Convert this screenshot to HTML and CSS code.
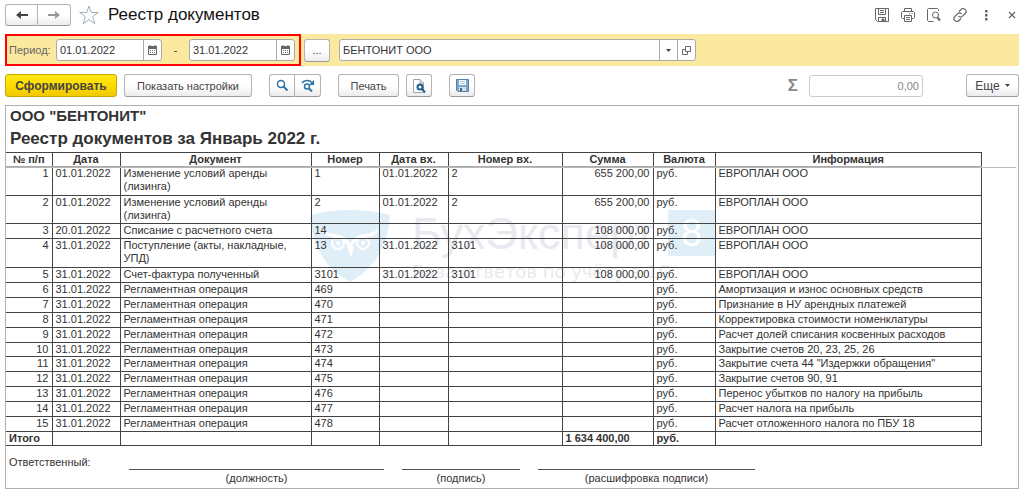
FILE: index.html
```html
<!DOCTYPE html>
<html lang="ru">
<head>
  <meta charset="UTF-8">
  <meta name="viewport" content="width=device-width, initial-scale=1.0">
  <title>Реестр документов</title>
  <link rel="stylesheet" href="styles.css">
</head>
<body>
  <!-- Заголовок формы -->
  <header class="titlebar">
    <div class="btn-group">
      <button class="btn nav-btn" aria-label="Назад">
        <svg width="14" height="12" viewBox="0 0 14 12"><path d="M13 6H3" stroke="#444" stroke-width="2"/><path d="M1 6l5-4v2.500L4.500 6 6 7.500V10z" fill="#444"/></svg>
      </button>
      <button class="btn nav-btn" aria-label="Вперед">
        <svg width="14" height="12" viewBox="0 0 14 12"><path d="M1 6h10" stroke="#999" stroke-width="2"/><path d="M13 6L8 2v2.500L9.500 6 8 7.500V10z" fill="#999"/></svg>
      </button>
    </div>
    <button class="icon-btn star" aria-label="В избранное">
      <svg width="20" height="20" viewBox="0 0 20 20"><path d="M10 1l2.300 6.500h7l-5.600 4.200 2.100 7L10 14.600l-5.800 4.100 2.100-7L.7 7.500h7z" fill="#fff" stroke="#a4adb6"/></svg>
    </button>
    <h1>Реестр документов</h1>
    <div class="window-tools">
      <button class="icon-btn" aria-label="Сохранить">
        <svg width="14" height="14" viewBox="0 0 14 14" fill="none" stroke="#666"><path d="M.5.5h13v13h-11l-2-2zM3.500.5v6h7v-6M5 2.500h4M5 4.500h4M3.500 13.500v-4h7v4"/><path d="M7 11h2v2H7z" fill="#666"/></svg>
      </button>
      <button class="icon-btn" aria-label="Печать">
        <svg width="14" height="14" viewBox="0 0 14 14" fill="none" stroke="#666"><path d="M3.500 3.500v-3h7v3M3.500 10.500h-2l-1-1v-5l1-1h11l1 1v5l-1 1h-2M3.500 7.500h7v6h-7zM5 9.500h4M5 11.500h4M8 5.500h1M10.500 5.500h1"/></svg>
      </button>
      <button class="icon-btn" aria-label="Просмотр">
        <svg width="14" height="14" viewBox="0 0 14 14" fill="none" stroke="#666"><path d="M11.500 3V1.500l-1-1h-9l-1 1v11l1 1h5"/><circle cx="8.500" cy="7" r="3"/><path d="M10.500 9.500l2.500 3" stroke-width="2"/></svg>
      </button>
      <button class="icon-btn" aria-label="Ссылка">
        <svg width="14" height="14" viewBox="0 0 14 14" fill="none" stroke="#666" stroke-width="1.200"><path d="M6 3.500L8 1.500a2.800 2.800 0 0 1 4.200 4L9.500 8.200a2.800 2.800 0 0 1-4 0M8 10.500l-2 2a2.800 2.800 0 0 1-4.200-4L4.500 5.800a2.800 2.800 0 0 1 4 0"/></svg>
      </button>
      <button class="icon-btn" aria-label="Меню">
        <svg width="14" height="14" viewBox="0 0 14 14" fill="#666"><path d="M6 2h2.500v2.500H6zM6 6h2.500v2.500H6zM6 10h2.500v2.500H6z"/></svg>
      </button>
      <button class="icon-btn" aria-label="Закрыть">
        <svg width="14" height="14" viewBox="0 0 14 14"><path d="M4 4l6 6M10 4l-6 6" stroke="#666" stroke-width="1.200"/></svg>
      </button>
    </div>
  </header>

  <!-- Отбор по периоду и организации -->
  <section class="filter">
    <div class="period">
      <label for="date-from">Период:</label>
      <div class="field date">
        <input id="date-from" type="text" value="01.01.2022">
        <button class="field-btn" aria-label="Выбрать дату начала">
          <svg width="9" height="10" viewBox="0 0 9 10"><path d="M.5 1.500h8v8h-8z" fill="none" stroke="#666"/><path d="M0 1h9v3H0z" fill="#666"/><path d="M2 0v2M7 0v2" stroke="#666"/><path d="M2 5.500h5M2 7.500h5" stroke="#777" stroke-dasharray="1 1"/></svg>
        </button>
      </div>
      <span class="dash">-</span>
      <div class="field date">
        <input id="date-to" type="text" value="31.01.2022" aria-label="Конец периода">
        <button class="field-btn" aria-label="Выбрать дату окончания">
          <svg width="9" height="10" viewBox="0 0 9 10"><path d="M.5 1.500h8v8h-8z" fill="none" stroke="#666"/><path d="M0 1h9v3H0z" fill="#666"/><path d="M2 0v2M7 0v2" stroke="#666"/><path d="M2 5.500h5M2 7.500h5" stroke="#777" stroke-dasharray="1 1"/></svg>
        </button>
      </div>
    </div>
    <button class="btn more-period">...</button>
    <div class="field company">
      <input type="text" value="БЕНТОНИТ ООО" aria-label="Организация">
      <button class="field-btn" aria-label="Выбрать из списка">
        <svg width="5" height="3" viewBox="0 0 5 3"><path d="M0 0h5L2.500 3z" fill="#444"/></svg>
      </button>
      <button class="field-btn" aria-label="Открыть">
        <svg width="9" height="9" viewBox="0 0 9 9" fill="none" stroke="#666"><path d="M3.500.5h5v5h-5zM3.500 3.500h-3v5h5v-3"/></svg>
      </button>
    </div>
  </section>

  <!-- Командная панель -->
  <section class="toolbar">
    <button class="btn primary">Сформировать</button>
    <button class="btn settings">Показать настройки</button>
    <div class="btn-group search">
      <button class="btn tool" aria-label="Найти">
        <svg width="13" height="13" viewBox="0 0 13 13" fill="none" stroke="#2a74a5"><circle cx="5" cy="5" r="3.500" stroke-width="1.500"/><path d="M7.500 7.500l4 4" stroke-width="2"/></svg>
      </button>
      <button class="btn tool" aria-label="Найти далее">
        <svg width="14" height="14" viewBox="0 0 14 14" fill="none" stroke="#2a74a5"><circle cx="6" cy="7.500" r="2.500" stroke-width="1.500"/><path d="M8 9.500l3 3" stroke-width="2"/><path d="M1 4C3.500 1 8 .5 11 3.500" stroke-width="1.500"/><path d="M13 1v5H8z" fill="#2a74a5" stroke="none"/></svg>
      </button>
    </div>
    <button class="btn print">Печать</button>
    <button class="btn tool" aria-label="Предварительный просмотр">
      <svg width="14" height="14" viewBox="0 0 14 14" fill="none"><path d="M8 .5H1.500v13h10V4z" fill="#fff" stroke="#9aa5ae"/><path d="M8 .5V4h3.500" stroke="#9aa5ae"/><circle cx="8" cy="8" r="2.500" stroke="#1d5c8c" stroke-width="2"/><path d="M10 10l3 3.500" stroke="#1d5c8c" stroke-width="2"/></svg>
    </button>
    <button class="btn tool save" aria-label="Сохранить отчет">
      <svg width="13" height="13" viewBox="0 0 13 13"><path d="M.5.500h12v12H2l-1.500-1.500z" fill="#7ba5cb" stroke="#5580a8"/><path d="M3 1h7v5H3z" fill="#fff"/><path d="M4 2.500h5M4 4.500h5" stroke="#a9bfd3"/><path d="M3 8h7v4H3z" fill="#d5dde5"/><path d="M4 9h2v3H4z" fill="#41668a"/></svg>
    </button>
    <label class="sigma" for="sum">Σ</label>
    <input id="sum" class="sum" type="text" value="0,00" readonly>
    <button class="btn more">Еще
      <svg width="5" height="3" viewBox="0 0 5 3"><path d="M0 0h5L2.500 3z" fill="#444"/></svg>
    </button>
  </section>

  <!-- Табличный документ -->
  <main class="report">
    <h2 class="company-name">ООО "БЕНТОНИТ"</h2>
    <h2 class="report-name">Реестр документов за Январь 2022 г.</h2>

    <div class="sheet">
      <div class="watermark" aria-hidden="true">
        <svg width="80" height="72" viewBox="0 0 80 72"><path d="M0 5Q40-5 80 5Q77 52 40 72Q3 52 0 5z" fill="#e0eef7"/><path d="M11 18q6 6 15 6q9 1 14 9q5-8 14-9q9 0 15-6q-3 9-12 9q-9-1-17 12q-8-13-17-12q-9 0-12-9z" fill="#fff"/><g fill="none" stroke="#fff" stroke-width="2"><circle cx="28" cy="33" r="6"/><circle cx="53" cy="33" r="6"/></g><path d="M37 36h7l-3 12z" fill="#fff"/><circle cx="28" cy="33" r="2" fill="#fff"/><circle cx="53" cy="33" r="2" fill="#fff"/></svg>
        <div class="wm-text">
          <div class="wm-name">БухЭксперт</div>
          <div class="wm-slogan">База ответов по учёту в 1С</div>
        </div>
        <div class="wm-eight">8</div>
      </div>

      <table>
        <colgroup>
          <col class="c-num"><col class="c-date"><col class="c-doc"><col class="c-no"><col class="c-date-in"><col class="c-no-in"><col class="c-sum"><col class="c-cur"><col class="c-info">
        </colgroup>
        <thead>
          <tr><th>№ п/п</th><th>Дата</th><th>Документ</th><th>Номер</th><th>Дата вх.</th><th>Номер вх.</th><th>Сумма</th><th>Валюта</th><th>Информация</th></tr>
        </thead>
        <tbody>
          <tr><td class="r">1</td><td>01.01.2022</td><td>Изменение условий аренды (лизинга)</td><td>1</td><td>01.01.2022</td><td>2</td><td class="r">655 200,00</td><td>руб.</td><td>ЕВРОПЛАН ООО</td></tr>
          <tr><td class="r">2</td><td>01.01.2022</td><td>Изменение условий аренды (лизинга)</td><td>2</td><td>01.01.2022</td><td>2</td><td class="r">655 200,00</td><td>руб.</td><td>ЕВРОПЛАН ООО</td></tr>
          <tr><td class="r">3</td><td>20.01.2022</td><td>Списание с расчетного счета</td><td>14</td><td></td><td></td><td class="r">108 000,00</td><td>руб.</td><td>ЕВРОПЛАН ООО</td></tr>
          <tr><td class="r">4</td><td>31.01.2022</td><td>Поступление (акты, накладные,<br>УПД)</td><td>13</td><td>31.01.2022</td><td>3101</td><td class="r">108 000,00</td><td>руб.</td><td>ЕВРОПЛАН ООО</td></tr>
          <tr><td class="r">5</td><td>31.01.2022</td><td>Счет-фактура полученный</td><td>3101</td><td>31.01.2022</td><td>3101</td><td class="r">108 000,00</td><td>руб.</td><td>ЕВРОПЛАН ООО</td></tr>
          <tr><td class="r">6</td><td>31.01.2022</td><td>Регламентная операция</td><td>469</td><td></td><td></td><td></td><td>руб.</td><td>Амортизация и износ основных средств</td></tr>
          <tr><td class="r">7</td><td>31.01.2022</td><td>Регламентная операция</td><td>470</td><td></td><td></td><td></td><td>руб.</td><td>Признание в НУ арендных платежей</td></tr>
          <tr><td class="r">8</td><td>31.01.2022</td><td>Регламентная операция</td><td>471</td><td></td><td></td><td></td><td>руб.</td><td>Корректировка стоимости номенклатуры</td></tr>
          <tr><td class="r">9</td><td>31.01.2022</td><td>Регламентная операция</td><td>472</td><td></td><td></td><td></td><td>руб.</td><td>Расчет долей списания косвенных расходов</td></tr>
          <tr><td class="r">10</td><td>31.01.2022</td><td>Регламентная операция</td><td>473</td><td></td><td></td><td></td><td>руб.</td><td>Закрытие счетов 20, 23, 25, 26</td></tr>
          <tr><td class="r">11</td><td>31.01.2022</td><td>Регламентная операция</td><td>474</td><td></td><td></td><td></td><td>руб.</td><td>Закрытие счета 44 "Издержки обращения"</td></tr>
          <tr><td class="r">12</td><td>31.01.2022</td><td>Регламентная операция</td><td>475</td><td></td><td></td><td></td><td>руб.</td><td>Закрытие счетов 90, 91</td></tr>
          <tr><td class="r">13</td><td>31.01.2022</td><td>Регламентная операция</td><td>476</td><td></td><td></td><td></td><td>руб.</td><td>Перенос убытков по налогу на прибыль</td></tr>
          <tr><td class="r">14</td><td>31.01.2022</td><td>Регламентная операция</td><td>477</td><td></td><td></td><td></td><td>руб.</td><td>Расчет налога на прибыль</td></tr>
          <tr><td class="r">15</td><td>31.01.2022</td><td>Регламентная операция</td><td>478</td><td></td><td></td><td></td><td>руб.</td><td>Расчет отложенного налога по ПБУ 18</td></tr>
        </tbody>
        <tfoot>
          <tr><td>Итого</td><td></td><td></td><td></td><td></td><td></td><td>1 634 400,00</td><td>руб.</td><td></td></tr>
        </tfoot>
      </table>
    </div>

    <div class="signatures">
      <span class="sign-label">Ответственный:</span>
      <span class="sign sign-post">(должность)</span>
      <span class="sign sign-hand">(подпись)</span>
      <span class="sign sign-name">(расшифровка подписи)</span>
    </div>
  </main>
</body>
</html>
```
FILE: styles.css
```css
* {
  box-sizing: border-box;
}

body {
  margin: 0;
  padding: 4px 5px 0;
  background: #fff;
  color: #333;
  font-family: "Liberation Sans", Arial, sans-serif;
  font-size: 11px;
}

button,
input {
  font: inherit;
  color: inherit;
}

svg {
  display: block;
  flex: none;
}

/* Кнопки */
.btn {
  display: flex;
  align-items: center;
  justify-content: center;
  height: 23px;
  padding: 0;
  border: 1px solid #b4b4b4;
  border-bottom-color: #999;
  border-radius: 3px;
  background: linear-gradient(#fff 50%, #ececec);
  color: #444;
}

.btn-group {
  display: flex;
}

.btn-group .btn:first-child {
  border-radius: 3px 0 0 3px;
}

.btn-group .btn:last-child {
  border-left: 0;
  border-radius: 0 3px 3px 0;
}

.icon-btn {
  padding: 0;
  border: 0;
  background: none;
}

/* Заголовок */
.titlebar {
  display: flex;
  align-items: center;
  height: 22px;
}

.titlebar .nav-btn {
  width: 33px;
  height: 22px;
}

.star {
  margin: 0 9px 0 8px;
}

h1 {
  margin: 0;
  color: #111;
  font-size: 17px;
  font-weight: normal;
}

.window-tools {
  display: flex;
  gap: 12px;
  margin-left: auto;
}

/* Отбор */
.filter {
  display: flex;
  align-items: center;
  height: 32px;
  margin-top: 8px;
  background: #fce9a0;
}

.period {
  display: flex;
  align-items: center;
  height: 32px;
  width: 296px;
  padding: 0 4px 0 2px;
  border: 2px solid #f00;
}

.period label {
  margin-right: auto;
  color: #666;
}

.field {
  display: flex;
  height: 22px;
  border: 1px solid #aaa;
  border-radius: 3px;
  background: #fff;
}

.field input {
  flex: 1;
  min-width: 0;
  padding: 0 3px;
  border: 0;
  background: none;
}

.field-btn {
  display: flex;
  align-items: center;
  justify-content: center;
  width: 18px;
  padding: 0;
  border: 0;
  border-left: 1px solid #aaa;
  background: none;
}

.date {
  width: 106px;
}

.dash {
  width: 27px;
  text-align: center;
}

.more-period {
  width: 26px;
  margin: 0 9px 0 3px;
}

.company {
  width: 357px;
}

/* Командная панель */
.toolbar {
  display: flex;
  align-items: center;
  height: 23px;
  margin-top: 8px;
}

.primary {
  width: 112px;
  border-color: #c8a800;
  background: linear-gradient(#ffe819, #ffdc00 50%, #f0c800);
  font-size: 12px;
  font-weight: bold;
}

.settings {
  width: 128px;
  margin-left: 7px;
}

.tool {
  width: 26px;
}

.search {
  margin: 0 17px;
}

.print {
  width: 61px;
  margin-right: 7px;
}

.save {
  margin-left: 17px;
}

.sigma {
  margin-left: auto;
  color: #888;
  font-size: 17px;
  font-weight: bold;
}

.sum {
  width: 114px;
  height: 22px;
  margin: 0 43px 0 11px;
  padding: 0 3px;
  border: 1px solid #ccc;
  border-radius: 3px;
  color: #888;
  text-align: right;
}

.more {
  gap: 5px;
  width: 53px;
  font-size: 12px;
}

/* Отчет */
.report {
  padding-bottom: 2px;
  border: 1px solid #b0b0b0;
  margin-top: 8px;
}

.report h2 {
  margin: 0;
  padding-left: 4px;
}

.report .company-name {
  font-size: 15px;
  line-height: 20px;
}

.report .report-name {
  font-size: 17px;
  line-height: 26px;
}

.sheet {
  position: relative;
}

/* линия закрепленной шапки справа от таблицы */
.sheet::after {
  content: "";
  position: absolute;
  top: 15px;
  right: 2px;
  left: 0;
  border-top: 1px solid #b8b8b8;
}

table {
  position: relative;
  width: 976px;
  height: 294px;
  border-collapse: collapse;
  table-layout: fixed;
  line-height: 13px;
}

th,
td {
  padding: 0 3px;
  border: 1px solid #444;
  vertical-align: top;
  text-align: left;
}

th {
  padding: 0;
  border-bottom-color: #aaa;
  text-align: center;
}

tr > :first-child {
  border-left: 0;
}

td.r {
  text-align: right;
}

tfoot td {
  font-weight: bold;
}

.c-num { width: 46px; }
.c-date { width: 68px; }
.c-doc { width: 191px; }
.c-no { width: 68px; }
.c-date-in { width: 69px; }
.c-no-in { width: 114px; }
.c-sum { width: 91px; }
.c-cur { width: 62px; }

/* Водяной знак */
.watermark {
  position: absolute;
  top: 58px;
  left: 304px;
  display: flex;
  width: 405px;
}

.wm-text {
  flex: 1;
  min-width: 0;
  padding-left: 22px;
  color: #e9e9ef;
  white-space: nowrap;
}

.wm-name {
  font-size: 45px;
  line-height: 48px;
}

.wm-slogan {
  font-family: "DejaVu Sans", sans-serif;
  font-size: 18px;
  line-height: 28px;
}

.wm-eight {
  width: 47px;
  height: 46px;
  background: #e0eef7;
  color: #fff;
  font-size: 38px;
  line-height: 46px;
  text-align: center;
}

/* Подписи */
.signatures {
  display: flex;
  padding: 8px 3px 0;
}

.sign-label {
  width: 120px;
  line-height: 16px;
}

.sign {
  margin: 15px 18px 0 0;
  border-top: 1px solid #555;
  line-height: 16px;
  text-align: center;
}

.sign-post { width: 255px; }
.sign-hand { width: 118px; }
.sign-name { width: 217px; }
```
